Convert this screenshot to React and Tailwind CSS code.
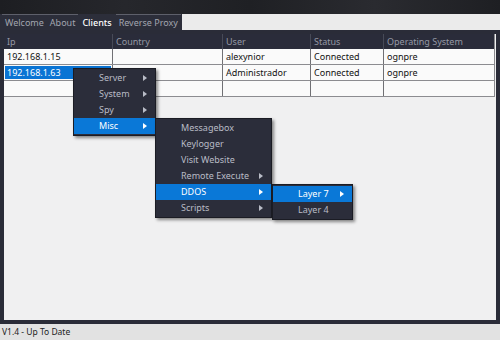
import { useState } from "react";

const columns = [
    { label: "Ip", w: "w-[109px]" },
    { label: "Country", w: "w-[110px]" },
    { label: "User", w: "w-[88px]" },
    { label: "Status", w: "w-[73px]" },
    { label: "Operating System", w: "flex-1" },
];

const rows = [
    ["192.168.1.15", "", "alexynior", "Connected", "ognpre"],
    ["192.168.1.63", "", "Administrador", "Connected", "ognpre"],
    ["", "", "", "", ""],
];

function Arrow() {
    return (
        <svg width="4" height="6" viewBox="0 0 4 6" className="shrink-0">
            <path d="M0 0 L4 3 L0 6 Z" fill="currentColor" />
        </svg>
    );
}

function MenuItem({ label, active, sub, indent }) {
    return (
        <div
            className={`flex h-[16px] items-center pr-[8px] ${indent} ${
                active ? "bg-[#0a78d7] text-white" : "text-[#b9bcc6]"
            }`}
        >
            <span className="flex-1">{label}</span>
            {sub && <Arrow />}
        </div>
    );
}

function Menu({ pos, indent, items }) {
    return (
        <div
            className={`absolute ${pos} border border-[#1b1c24] bg-[#2b2d3a] py-[1px] shadow-[2px_2px_3px_rgba(0,0,0,0.45)]`}
        >
            {items.map((it) => (
                <MenuItem key={it.label} {...it} indent={indent} />
            ))}
        </div>
    );
}

export default function App() {
    const [tab] = useState("Clients");
    const tabs = ["Welcome", "About", "Clients", "Reverse Proxy"];

    return (
        <div
            className="relative flex h-[340px] w-[500px] flex-col overflow-hidden bg-[#e4e4e4] text-[9px]"
            style={{ fontFamily: '"Noto Sans", "Liberation Sans", sans-serif' }}
        >
            <div className="h-[14px] bg-[linear-gradient(90deg,#1d1e22,#26272c,#1f2024,#2a2b30,#1e1f23)]" />

            <div className="flex h-[16px] bg-[#ebebeb]">
                <div className="flex items-stretch bg-[#2c2e3a] pl-[2px] pr-[1px]">
                    {tabs.map((t) =>
                        t === tab ? (
                            <div
                                key={t}
                                className="mt-[1px] flex items-center px-[4px] font-medium text-white"
                            >
                                {t}
                            </div>
                        ) : (
                            <div
                                key={t}
                                className="flex items-center border-t border-[#5e606b] px-[3px] text-[#a3a6b0]"
                            >
                                {t}
                            </div>
                        )
                    )}
                </div>
                <div className="flex-1" />
            </div>

            <div className="flex flex-1 flex-col border-4 border-[#2a2c38] bg-[#f0f0f1]">
                <div className="mr-[1px] flex flex-col border-r border-[#8a8a8e]">
                    <div className="flex h-[15px] bg-[#2a2c3a] text-[#9598a4]">
                        {columns.map((c, i) => (
                            <div
                                key={c.label}
                                className={`${c.w} flex items-center px-[3px] ${
                                    i < columns.length - 1 ? "border-r border-[#474a57]" : ""
                                }`}
                            >
                                {c.label}
                            </div>
                        ))}
                    </div>
                    {rows.map((r, ri) => (
                        <div
                            key={ri}
                            className="flex h-[16px] border-b border-[#8c8c90] bg-[#fafafa] text-[#111]"
                        >
                            {r.map((v, ci) => (
                                <div
                                    key={ci}
                                    className={`${columns[ci].w} flex items-center ${
                                        ci < r.length - 1 ? "border-r border-[#707074]" : ""
                                    }`}
                                >
                                    {ri === 1 && ci === 0 ? (
                                        <div className="m-[1px] flex h-[13px] flex-1 items-center bg-[#0a74d4] px-[2px] text-white">
                                            {v}
                                        </div>
                                    ) : (
                                        <span className="px-[3px]">{v}</span>
                                    )}
                                </div>
                            ))}
                        </div>
                    ))}
                </div>
            </div>

            <div className="flex h-[16px] items-center bg-[#e2e2e2] pl-[2px] text-[8.5px] text-[#222]">
                V1.4 - Up To Date
            </div>

            <Menu
                pos="left-[73px] top-[68px] w-[83px]"
                indent="pl-[25px]"
                items={[
                    { label: "Server", sub: true },
                    { label: "System", sub: true },
                    { label: "Spy", sub: true },
                    { label: "Misc", sub: true, active: true },
                ]}
            />
            <Menu
                pos="left-[155px] top-[118px] w-[117px]"
                indent="pl-[25px]"
                items={[
                    { label: "Messagebox" },
                    { label: "Keylogger" },
                    { label: "Visit Website" },
                    { label: "Remote Execute", sub: true },
                    { label: "DDOS", sub: true, active: true },
                    { label: "Scripts", sub: true },
                ]}
            />
            <Menu
                pos="left-[272px] top-[184px] w-[81px]"
                indent="pl-[25px]"
                items={[
                    { label: "Layer 7", sub: true, active: true },
                    { label: "Layer 4" },
                ]}
            />
        </div>
    );
}
